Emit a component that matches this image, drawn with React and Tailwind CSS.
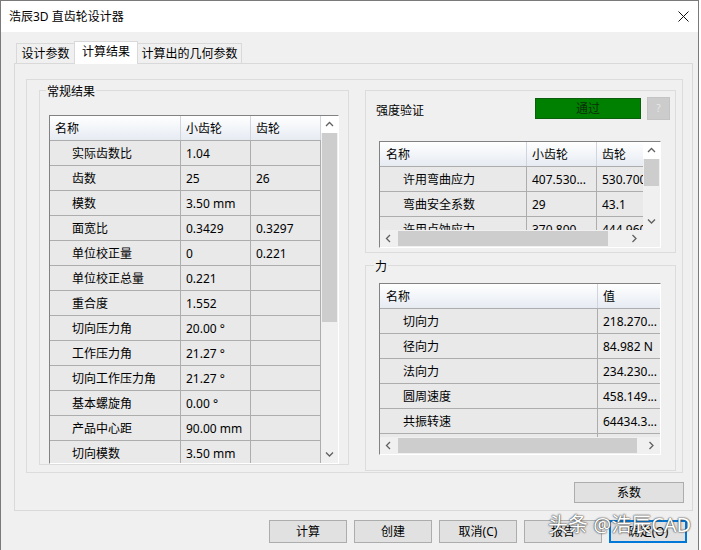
import React from 'react'

const FONT = "font-['Noto_Sans','Noto_Sans_CJK_SC',sans-serif]"

const LINE = 'border-[#adadad]'

function Arrow({ dir }) {
  const vert = dir === 'up' || dir === 'down'
  const d = {
    up: 'M1 5L4.5 1.5L8 5',
    down: 'M1 1.5L4.5 5L8 1.5',
    left: 'M5 1L1.5 4.5L5 8',
    right: 'M1.5 1L5 4.5L1.5 8',
  }[dir]
  return (
    <svg width={vert ? 9 : 7} height={vert ? 7 : 9} viewBox={vert ? '0 0 9 7' : '0 0 7 9'}>
      <path d={d} fill="none" stroke="#606060" strokeWidth="1.3" />
    </svg>
  )
}

function VScroll({ thumb }) {
  return (
    <div className="flex h-full w-[17px] flex-col bg-[#f0f0f0]">
      <div className="flex h-[17px] items-center justify-center bg-white">
        <Arrow dir="up" />
      </div>
      <div className={`mx-[1px] bg-[#cdcdcd] ${thumb}`} />
      <div className="flex-1" />
      <div className="flex h-[17px] items-center justify-center">
        <Arrow dir="down" />
      </div>
    </div>
  )
}

function HScroll({ thumb }) {
  return (
    <div className="flex h-[17px] flex-1 bg-[#f0f0f0]">
      <div className="flex w-[17px] items-center justify-center">
        <Arrow dir="left" />
      </div>
      <div className={`my-[1px] ml-[1px] bg-[#cdcdcd] ${thumb}`} />
      <div className="flex-1" />
      <div className="flex w-[17px] items-center justify-center">
        <Arrow dir="right" />
      </div>
    </div>
  )
}

// header + rows; every cell clips its text like a list view column
function Grid({ cols, rows }) {
  return (
    <div className="h-full flex-1 overflow-hidden">
      <div className={`flex h-[25px] border-b ${LINE} bg-linear-to-b from-white to-[#e6ebf3]`}>
        {cols.map((c, i) => (
          <div
            key={i}
            className={`flex shrink-0 items-center overflow-hidden whitespace-nowrap border-r border-[#d0d5dd] pt-[1px] ${c.w} ${c.hp}`}
          >
            {c.label}
          </div>
        ))}
      </div>
      {rows.map((r, ri) => (
        <div key={ri} className={`flex h-[25px] border-b ${LINE} bg-[#e9e9e9]`}>
          {cols.map((c, i) => (
            <div
              key={i}
              className={`flex shrink-0 items-center overflow-hidden whitespace-nowrap border-r pt-[2px] ${LINE} ${c.w} ${i === 0 ? c.rp : c.hp}`}
            >
              {r[i]}
            </div>
          ))}
        </div>
      ))}
    </div>
  )
}

function Box({ className, children }) {
  return (
    <div
      className={`border-t border-l border-t-[#828282] border-l-[#828282] border-r border-b border-r-white border-b-white ${className}`}
    >
      {children}
    </div>
  )
}

const mainRows = [
  ['实际齿数比', '1.04', ''],
  ['齿数', '25', '26'],
  ['模数', '3.50 mm', ''],
  ['面宽比', '0.3429', '0.3297'],
  ['单位校正量', '0', '0.221'],
  ['单位校正总量', '0.221', ''],
  ['重合度', '1.552', ''],
  ['切向压力角', '20.00 °', ''],
  ['工作压力角', '21.27 °', ''],
  ['切向工作压力角', '21.27 °', ''],
  ['基本螺旋角', '0.00 °', ''],
  ['产品中心距', '90.00 mm', ''],
  ['切向模数', '3.50 mm', ''],
  ['', '', ''],
]

const strengthRows = [
  ['许用弯曲应力', '407.530...', '530.700 MPa'],
  ['弯曲安全系数', '29', '43.1'],
  ['许用点蚀应力', '370.800...', '444.960 MPa'],
]

const forceRows = [
  ['切向力', '218.270...'],
  ['径向力', '84.982 N'],
  ['法向力', '234.230...'],
  ['圆周速度', '458.149...'],
  ['共振转速', '64434.3...'],
  ['', ''],
]

function Button({ children, focused, className = '' }) {
  return (
    <div
      className={`flex h-[23px] w-[78px] items-center justify-center bg-[#e1e1e1] ${
        focused ? 'border-2 border-[#0078d7]' : 'border border-[#adadad]'
      } ${className}`}
    >
      {children}
    </div>
  )
}

export default function App() {
  return (
    <div className={`relative h-[550px] w-[701px] overflow-hidden bg-white text-[12px] text-black ${FONT}`}>
      <div className="flex h-[551px] w-[699px] flex-col border border-[#7a7a7a] bg-[#f0f0f0]">
        {/* title bar */}
        <div className="flex h-[31px] shrink-0 items-center justify-between bg-white pl-[8px] pr-[9px]">
          <span className="text-[12px]">浩辰3D 直齿轮设计器</span>
          <svg width="11" height="11" viewBox="0 0 11 11">
            <path d="M0.5 0.5L10.5 10.5M10.5 0.5L0.5 10.5" stroke="#111" strokeWidth="1" />
          </svg>
        </div>

        {/* tabs */}
        <div className="mt-[9px] ml-[15px] flex h-[22px] items-end">
          <div className="flex h-[20px] w-[58px] items-center justify-center border-t border-l border-[#d9d9d9] pt-[1px]">
            设计参数
          </div>
          <div className="relative z-10 -mb-[1px] flex h-[23px] w-[64px] items-center justify-center border-t border-l border-r border-[#d9d9d9] bg-white pb-[2px]">
            计算结果
          </div>
          <div className="flex h-[20px] w-[104px] items-center justify-center border-t border-r border-[#d9d9d9] pt-[1px]">
            计算出的几何参数
          </div>
        </div>

        {/* tab page */}
        <div className="ml-[13px] flex h-[448px] w-[679px] flex-col border border-[#d9d9d9] bg-[#f0f0f0]">
          <div className="mt-[15px] ml-[11px] flex h-[394px] w-[657px] border border-[#dcdcdc]">
            {/* left group */}
            <div className="relative mt-[10px] ml-[12px] h-[375px] w-[310px] border border-[#dcdcdc]">
              <span className="absolute -top-[7px] left-[6px] bg-[#f0f0f0] px-[1px] leading-[16px]">常规结果</span>
              <Box className="mt-[24px] ml-[9px] flex h-[349px] w-[290px]">
                <Grid
                  cols={[
                    { label: '名称', w: 'w-[131px]', hp: 'pl-[5px]', rp: 'pl-[22px]' },
                    { label: '小齿轮', w: 'w-[70px]', hp: 'pl-[5px]' },
                    { label: '齿轮', w: 'w-[70px]', hp: 'pl-[5px]' },
                  ]}
                  rows={mainRows}
                />
                <VScroll thumb="h-[189px]" />
              </Box>
            </div>

            {/* right column */}
            <div className="ml-[16px] flex w-[311px] flex-col">
              <div className="mt-[10px] h-[163px] border border-[#dcdcdc]">
                <div className="mt-[6px] flex h-[23px] items-center">
                  <span className="mt-[5px] ml-[10px] text-[12px]">强度验证</span>
                  <div className="flex-1" />
                  <div className="flex h-[21px] w-[106px] items-center justify-center border border-[#0b5e0b] bg-[#008000] text-[#0a300a]">
                    通过
                  </div>
                  <div className="mr-[5px] ml-[6px] flex h-[23px] w-[23px] items-center justify-center border border-[#c4c4c4] bg-[#cccccc] text-[10px] text-[#e8e8e8]">
                    ?
                  </div>
                </div>
                <Box className="mt-[21px] ml-[13px] flex h-[107px] w-[282px] flex-col">
                  <div className="flex h-[88px]">
                    <Grid
                      cols={[
                        { label: '名称', w: 'w-[147px]', hp: 'pl-[6px]', rp: 'pl-[23px]' },
                        { label: '小齿轮', w: 'w-[70px]', hp: 'pl-[5px]' },
                        { label: '齿轮', w: 'w-[70px]', hp: 'pl-[5px]' },
                      ]}
                      rows={strengthRows}
                    />
                    <VScroll thumb="h-[27px]" />
                  </div>
                  <div className="flex">
                    <HScroll thumb="w-[210px]" />
                    <div className="h-[17px] w-[17px] bg-[#f0f0f0]" />
                  </div>
                </Box>
              </div>

              <div className="relative mt-[12px] h-[206px] border border-[#dcdcdc]">
                <span className="absolute -top-[7px] left-[8px] bg-[#f0f0f0] px-[1px] leading-[16px]">力</span>
                <Box className="mt-[17px] ml-[13px] flex h-[172px] w-[282px] flex-col">
                  <div className="flex h-[153px]">
                    <Grid
                      cols={[
                        { label: '名称', w: 'w-[218px]', hp: 'pl-[6px]', rp: 'pl-[23px]' },
                        { label: '值', w: 'w-[70px]', hp: 'pl-[5px]' },
                      ]}
                      rows={forceRows}
                    />
                  </div>
                  <div className="flex">
                    <HScroll thumb="w-[239px]" />
                  </div>
                </Box>
              </div>
            </div>
          </div>

          <div className="mt-[9px] mr-[8px] flex h-[21px] w-[110px] items-center justify-center self-end border border-[#adadad] bg-[#e1e1e1] pt-[1px]">
            系数
          </div>
        </div>

        {/* dialog buttons */}
        <div className="mt-[9px] ml-[268px] flex gap-[7px]">
          <Button>计算</Button>
          <Button>创建</Button>
          <Button>取消(C)</Button>
          <Button>报告</Button>
          <Button focused>确定(O)</Button>
        </div>
      </div>

      {/* watermark */}
      <div className="pointer-events-none absolute top-[512px] left-[548px] text-[20px] leading-[26px] text-white [text-shadow:0_0_2px_#333,0_0_1px_#333]">
        头条 @浩辰CAD
      </div>
    </div>
  )
}
